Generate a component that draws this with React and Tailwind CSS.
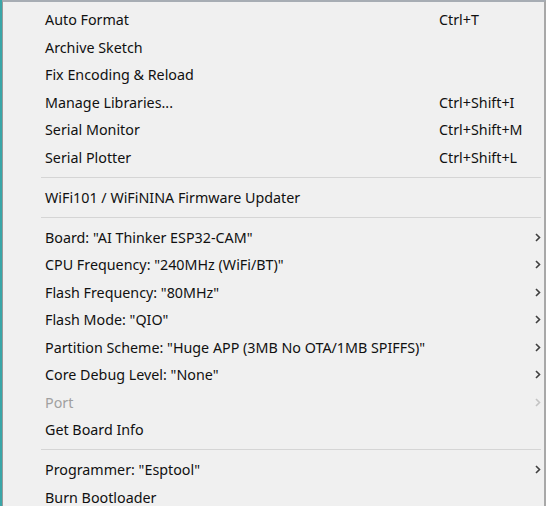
import React from 'react';

const groups = [
  [
    { label: 'Auto Format', key: 'Ctrl+T' },
    { label: 'Archive Sketch' },
    { label: 'Fix Encoding & Reload' },
    { label: 'Manage Libraries...', key: 'Ctrl+Shift+I' },
    { label: 'Serial Monitor', key: 'Ctrl+Shift+M' },
    { label: 'Serial Plotter', key: 'Ctrl+Shift+L' },
  ],
  [{ label: 'WiFi101 / WiFiNINA Firmware Updater' }],
  [
    { label: 'Board: "AI Thinker ESP32-CAM"', sub: true },
    { label: 'CPU Frequency: "240MHz (WiFi/BT)"', sub: true },
    { label: 'Flash Frequency: "80MHz"', sub: true },
    { label: 'Flash Mode: "QIO"', sub: true },
    { label: 'Partition Scheme: "Huge APP (3MB No OTA/1MB SPIFFS)"', sub: true },
    { label: 'Core Debug Level: "None"', sub: true },
    { label: 'Port', sub: true, disabled: true },
    { label: 'Get Board Info' },
  ],
  [
    { label: 'Programmer: "Esptool"', sub: true },
    { label: 'Burn Bootloader' },
  ],
];

function Chevron({ disabled }) {
  return (
    <svg width="6" height="9" viewBox="0 0 6 9" className="shrink-0">
      <path d="M1 1 L4.5 4.5 L1 8" fill="none" stroke={disabled ? '#c4c4c4' : '#404040'} strokeWidth="1.6" />
    </svg>
  );
}

function Item({ item }) {
  return (
    <div className={`flex items-center h-[27.5px] pl-[42px] ${item.disabled ? 'text-[#a0a0a0]' : 'text-[#111]'}`}>
      <span className="w-[394px] whitespace-nowrap">{item.label}</span>
      <span className="flex-1 whitespace-nowrap">{item.key || ''}</span>
      <div className="w-[9px] flex justify-start">{item.sub && <Chevron disabled={item.disabled} />}</div>
    </div>
  );
}

export default function App() {
  return (
    <div className="flex w-[546px] h-[506px] overflow-hidden bg-white" style={{ fontFamily: '"Noto Sans", sans-serif' }}>
      <div className="w-[2px] bg-[#3aa6a8]" />
      <div className="flex-1 bg-[#f0f0f0] border-l border-t-2 border-r-2 border-l-[#9a9a9a] border-t-[#a7adb4] border-r-[#a8a8a8] pt-[4px] text-[14.3px]">
        {groups.map((g, gi) => (
          <div key={gi}>
            {gi > 0 && (
              <div className="h-[12.5px] flex items-center ml-[38px] mr-[3px]">
                <div className="h-px w-full bg-[#d5d5d5]" />
              </div>
            )}
            {g.map((it, i) => <Item key={i} item={it} />)}
          </div>
        ))}
      </div>
    </div>
  );
}
